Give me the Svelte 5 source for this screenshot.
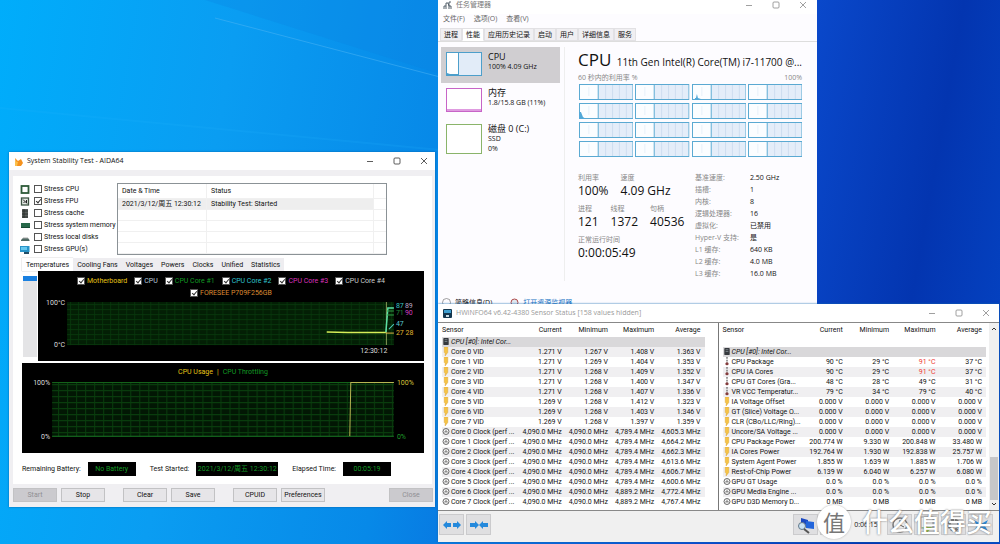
<script>
  const stress = [
    { name: 'Stress CPU', icon: 'cpu' },
    { name: 'Stress FPU', icon: 'fpu', on: true },
    { name: 'Stress cache', icon: 'cache' },
    { name: 'Stress system memory', icon: 'ram' },
    { name: 'Stress local disks', icon: 'disk' },
    { name: 'Stress GPU(s)', icon: 'gpu' },
  ];
  const tabs = ['Temperatures', 'Cooling Fans', 'Voltages', 'Powers', 'Clocks', 'Unified', 'Statistics'];
  const probes = [
    ['Motherboard', 'gold'],
    ['CPU', 'pale'],
    ['CPU Core #1', 'green'],
    ['CPU Core #2', 'cyan'],
    ['CPU Core #3', 'magenta'],
    ['CPU Core #4', 'light'],
  ];
  const taskTabs = ['进程', '性能', '应用历史记录', '启动', '用户', '详细信息', '服务'];
  const cores = Array.from({ length: 16 }, (_, i) => i);
  const spikes = {
    0: 'M0 15 L20 15.5 V16 H0 Z',
    2: 'M3 16 V14 L4 14 L5 10 L6 14 L9 15 V16 Z',
    4: 'M0 16 V9 L2 9 L4 14 L7 16 Z',
    6: 'M0 15.5 H10 V16 H0 Z',
  };
  const specs = [
    ['基准速度:', '2.50 GHz'],
    ['插槽:', '1'],
    ['内核:', '8'],
    ['逻辑处理器:', '16'],
    ['虚拟化:', '已禁用'],
    ['Hyper-V 支持:', '是'],
    ['L1 缓存:', '640 KB'],
    ['L2 缓存:', '4.0 MB'],
    ['L3 缓存:', '16.0 MB'],
  ];
  const columns = ['Current', 'Minimum', 'Maximum', 'Average'];
  const left = [
    ['volt', 'Core 0 VID', '1.271 V', '1.267 V', '1.408 V', '1.363 V'],
    ['volt', 'Core 1 VID', '1.271 V', '1.269 V', '1.404 V', '1.353 V'],
    ['volt', 'Core 2 VID', '1.271 V', '1.268 V', '1.409 V', '1.352 V'],
    ['volt', 'Core 3 VID', '1.271 V', '1.268 V', '1.400 V', '1.347 V'],
    ['volt', 'Core 4 VID', '1.271 V', '1.268 V', '1.407 V', '1.336 V'],
    ['volt', 'Core 5 VID', '1.269 V', '1.268 V', '1.412 V', '1.323 V'],
    ['volt', 'Core 6 VID', '1.269 V', '1.268 V', '1.403 V', '1.346 V'],
    ['volt', 'Core 7 VID', '1.269 V', '1.268 V', '1.397 V', '1.359 V'],
    ['clock', 'Core 0 Clock (perf ...', '4,090.0 MHz', '4,090.0 MHz', '4,789.4 MHz', '4,605.3 MHz'],
    ['clock', 'Core 1 Clock (perf ...', '4,090.0 MHz', '4,090.0 MHz', '4,789.4 MHz', '4,664.2 MHz'],
    ['clock', 'Core 2 Clock (perf ...', '4,090.0 MHz', '4,090.0 MHz', '4,789.4 MHz', '4,662.3 MHz'],
    ['clock', 'Core 3 Clock (perf ...', '4,090.0 MHz', '4,090.0 MHz', '4,789.4 MHz', '4,613.6 MHz'],
    ['clock', 'Core 4 Clock (perf ...', '4,090.0 MHz', '4,090.0 MHz', '4,789.4 MHz', '4,606.7 MHz'],
    ['clock', 'Core 5 Clock (perf ...', '4,090.0 MHz', '4,090.0 MHz', '4,789.4 MHz', '4,600.6 MHz'],
    ['clock', 'Core 6 Clock (perf ...', '4,090.0 MHz', '4,090.0 MHz', '4,889.2 MHz', '4,772.4 MHz'],
    ['clock', 'Core 7 Clock (perf ...', '4,090.0 MHz', '4,090.0 MHz', '4,889.2 MHz', '4,767.4 MHz'],
  ];
  const right = [
    ['temp', 'CPU Package', '90 °C', '29 °C', '91 °C', '37 °C'],
    ['temp', 'CPU IA Cores', '90 °C', '29 °C', '91 °C', '37 °C'],
    ['temp', 'CPU GT Cores (Gra...', '48 °C', '28 °C', '49 °C', '31 °C'],
    ['temp', 'VR VCC Temperatur...', '79 °C', '34 °C', '79 °C', '40 °C'],
    ['volt', 'IA Voltage Offset', '0.000 V', '0.000 V', '0.000 V', '0.000 V'],
    ['volt', 'GT (Slice) Voltage O...', '0.000 V', '0.000 V', '0.000 V', '0.000 V'],
    ['volt', 'CLR (CBo/LLC/Ring)...', '0.000 V', '0.000 V', '0.000 V', '0.000 V'],
    ['volt', 'Uncore/SA Voltage ...', '0.000 V', '0.000 V', '0.000 V', '0.000 V'],
    ['volt', 'CPU Package Power', '200.774 W', '9.330 W', '200.848 W', '33.480 W'],
    ['volt', 'IA Cores Power', '192.764 W', '1.930 W', '192.838 W', '25.757 W'],
    ['volt', 'System Agent Power', '1.855 W', '1.639 W', '1.885 W', '1.706 W'],
    ['volt', 'Rest-of-Chip Power', '6.139 W', '6.040 W', '6.257 W', '6.080 W'],
    ['clock', 'GPU GT Usage', '0.0 %', '0.0 %', '0.0 %', '0.0 %'],
    ['clock', 'GPU Media Engine ...', '0.0 %', '0.0 %', '0.0 %', '0.0 %'],
    ['clock', 'GPU D3D Memory D...', '0 MB', '0 MB', '0 MB', '0 MB'],
  ];
</script>

{#snippet controls()}
  <div class="controls">
    <button aria-label="Minimize"><svg viewBox="0 0 8 8"><path d="M1 4.500 H7" /></svg></button>
    <button aria-label="Maximize"><svg viewBox="0 0 8 8"><rect x="1" y="1" width="6" height="6" rx="1" /></svg></button>
    <button aria-label="Close"><svg viewBox="0 0 8 8"><path d="M1 1 L7 7 M7 1 L1 7" /></svg></button>
  </div>
{/snippet}

{#snippet stressIcon(kind)}
  <svg class="dev" viewBox="0 0 10 9">
    {#if kind === 'cpu'}
      <rect x="1.500" y="1" width="7" height="7" fill="#fff" stroke="#2d5a38" stroke-width="1.800" />
    {:else if kind === 'fpu'}
      <rect x="1.500" y="1" width="7" height="7" fill="#e3e9e3" stroke="#3c5443" stroke-width="1.300" />
      <path d="M3 2.500 L7 6.500 M6.500 3 V6 M3.500 6 L5 4.500" stroke="#222" />
    {:else if kind === 'cache'}
      <rect x="2" y="0" width="6" height="9" fill="#5b605e" />
      <path d="M2 2 H8 M2 5 H8 M2 8 H8 M4 0 V9" stroke="#242827" stroke-width=".8" />
    {:else if kind === 'ram'}
      <rect x="1" y="2" width="9" height="5" fill="#27694a" />
      <path d="M1 6.500 H10" stroke="#164a34" />
    {:else if kind === 'disk'}
      <path d="M1 7 L3 5 H8 L9.500 7 V8 H1 Z" fill="#4e6963" />
      <path d="M3 5 H8" stroke="#aaa" />
    {:else}
      <rect x="0" y="1" width="9.500" height="6" fill="#2894c8" />
      <rect x="1" y="2" width="6" height="3" fill="#63c7ee" />
      <rect x="4" y="7" width="5" height="2" fill="#234f68" />
    {/if}
  </svg>
{/snippet}

{#snippet sensorIcon(kind)}
  <svg class="sicon" viewBox="0 0 8 10">
    {#if kind === 'volt'}
      <path d="M2 0 H6 V6 L3 10 V7 L2 6 Z" fill="#f6c445" stroke="#d9a441" stroke-width=".5" />
    {:else if kind === 'clock'}
      <circle cx="4" cy="5" r="3.300" fill="#fff" stroke="#444" stroke-width=".9" />
      <path d="M4 3 V5.500 H6 M2 5.500 H4" fill="none" stroke="#444" stroke-width=".8" />
    {:else if kind === 'temp'}
      <path d="M4 0 V7" stroke="#777" stroke-width="1.600" stroke-dasharray="2 1" />
      <circle cx="4" cy="7.500" r="1.800" fill="#843c3c" />
    {:else}
      <rect x="1" y="1" width="6" height="8" rx="1" fill="#35393d" />
      <path d="M2.500 3 H5.500 M2.500 5 H5.500" stroke="#9aa4ac" stroke-width=".7" />
    {/if}
  </svg>
{/snippet}

{#snippet sensorTable(rows, gap)}
  <table class="sensors">
    <colgroup><col class="name" /><col /><col /><col /><col /><col class="pad" /></colgroup>
    <thead>
      <tr>
        <th>Sensor</th>
        {#each columns as c}<th class="num">{c}</th>{/each}
        <th></th>
      </tr>
    </thead>
    <tbody>
      {#if gap}<tr class="blank"><td colspan="6"></td></tr>{/if}
      <tr class="group">
        <td colspan="6">{@render sensorIcon('chip')}<em>CPU [#0]: Intel Cor...</em></td>
      </tr>
      {#each rows as [icon, name, ...values], i}
        <tr class:alt={gap ? i % 2 === 1 : i % 2 === 0}>
          <td>{@render sensorIcon(icon)}{name}</td>
          {#each values as v}<td class="num" class:hot={v === '91 °C'}>{v}</td>{/each}
          <td></td>
        </tr>
      {/each}
    </tbody>
  </table>
{/snippet}

<main class="desktop">
  <svg class="beams" viewBox="0 0 1000 544" preserveAspectRatio="none">
    <path d="M205 0 L440 74 V0 Z" fill="#0b7fe0" opacity=".25" />
    <path d="M215 18 L440 77" stroke="#4fb6f5" opacity=".5" />
    <path d="M0 108 L440 150" stroke="#25b6ff" stroke-width="2" opacity=".15" />
  </svg>

  <section class="window stability">
    <header class="titlebar">
      <svg class="logo" viewBox="0 0 9 9"><path d="M1 1 L4 4 L7 2 L9 6 L7 9 H2 Z" fill="#f5921e" /><path d="M1 4 L4 5 L3 9 H1 Z" fill="#fbc04b" /></svg>
      <h1>System Stability Test - AIDA64</h1>
      {@render controls()}
    </header>
    <div class="panel">
      <div class="setup">
        <div class="checks">
          {#each stress as s}
            <label>{@render stressIcon(s.icon)}<input type="checkbox" checked={s.on} />{s.name}</label>
          {/each}
        </div>
        <table class="events">
          <colgroup><col class="date" /><col /><col class="end" /></colgroup>
          <thead><tr><th>Date &amp; Time</th><th>Status</th><th></th></tr></thead>
          <tbody>
            <tr class="picked"><td>2021/3/12/周五 12:30:12</td><td>Stability Test: Started</td><td></td></tr>
            {#each [1, 2, 3, 4] as n (n)}<tr><td></td><td></td><td></td></tr>{/each}
          </tbody>
        </table>
      </div>
      <nav class="tabs">
        {#each tabs as t, i}<button class:active={i === 0}>{t}</button>{/each}
      </nav>
      <div class="temps">
        <div class="tree"></div>
        <div class="graph">
          <div class="legend">
            {#each probes as [name, tone]}
              <label class={tone}><input type="checkbox" checked />{name}</label>
            {/each}
          </div>
          <div class="legend">
            <label class="orange"><input type="checkbox" checked />FORESEE P709F256GB</label>
          </div>
          <svg class="plot" viewBox="0 0 385 63">
            <defs>
              <pattern id="fine" width="8" height="5" patternUnits="userSpaceOnUse">
                <path d="M0 .5 H8 M.5 0 V5" stroke="#083a0c" stroke-width=".7" />
              </pattern>
            </defs>
            <rect x="29" y="3" width="326" height="43" fill="#031f05" />
            <rect x="29" y="3" width="326" height="43" fill="url(#fine)" />
            <path d="M347.500 3 V46" stroke="#879b58" />
            <path d="M288 33 L309 33.500 H347" class="trace" stroke="#d6ee58" />
            <path d="M347 33 L349 9 H355" class="trace" stroke="#5be0a4" />
            <path d="M348 12 H355 M348 16 H355" stroke="#2f9a45" />
            <path d="M350 30 L355 25" stroke="#4fc7ba" fill="none" />
            <path d="M347 34 H355" stroke="#e0b546" />
            <text x="27" y="6" text-anchor="end" fill="#ddd">100°C</text>
            <text x="27" y="48" text-anchor="end" fill="#ddd">0°C</text>
            <text x="357" y="9" fill="#37c3c3">87</text>
            <text x="366" y="9" fill="#b9a7c4">89</text>
            <text x="357" y="16" fill="#238a3d">71</text>
            <text x="366" y="16" fill="#d43ec0">90</text>
            <text x="357" y="27" fill="#5ac7d2">47</text>
            <text x="357" y="36" fill="#e0b52f">27 28</text>
            <text x="335" y="54" text-anchor="middle" fill="#ddd">12:30:12</text>
          </svg>
        </div>
      </div>
      <div class="graph usage">
        <p><span class="gold">CPU Usage</span><span class="gold">|</span><span class="green">CPU Throttling</span></p>
        <svg class="plot" viewBox="0 0 401 75">
          <defs>
            <pattern id="coarse" width="9" height="6" patternUnits="userSpaceOnUse">
              <path d="M0 .5 H9 M.5 0 V6" stroke="#093d0d" />
            </pattern>
          </defs>
          <rect x="30" y="4" width="341" height="54" fill="#021704" />
          <rect x="30" y="4" width="341" height="54" fill="url(#coarse)" />
          <path d="M30 4.500 H371" stroke="#14611a" />
          <path d="M30 58 H371" stroke="#1a7c24" />
          <path d="M327 58 L328 4.500 H371" fill="none" stroke="#b7b552" />
          <text x="28" y="7" text-anchor="end" fill="#ddd">100%</text>
          <text x="28" y="61" text-anchor="end" fill="#ddd">0%</text>
          <text x="374" y="7" fill="#d9c53c">100%</text>
          <text x="374" y="61" fill="#1f9a2a">0%</text>
        </svg>
      </div>
      <div class="status">
        <span>Remaining Battery:</span><output>No Battery</output>
        <span>Test Started:</span><output class="wide">2021/3/12/周五 12:30:12</output>
        <span>Elapsed Time:</span><output>00:05:19</output>
      </div>
    </div>
    <footer class="actions">
      <button disabled>Start</button>
      <button>Stop</button>
      <button class="apart">Clear</button>
      <button>Save</button>
      <button class="apart">CPUID</button>
      <button>Preferences</button>
      <button class="last" disabled>Close</button>
    </footer>
  </section>

  <section class="window taskmgr">
    <header class="titlebar">
      <svg class="logo" viewBox="0 0 9 9"><path d="M1 8 V5 H3 V2 H5 L6 5 H8 V8 M3 8 V5 M6 8 V1 H8" fill="none" stroke="#55606a" /></svg>
      <h1>任务管理器</h1>
      {@render controls()}
    </header>
    <nav class="menu"><button>文件(F)</button><button>选项(O)</button><button>查看(V)</button></nav>
    <nav class="tasktabs">
      {#each taskTabs as t, i}<button class:active={i === 1}>{t}</button>{/each}
    </nav>
    <div class="perf">
      <ul class="devices">
        <li class="selected">
          <svg class="thumb" viewBox="0 0 36 24"><rect x=".5" y=".5" width="35" height="23" fill="#fff" stroke="#4d9fcb" /><rect x="13" y="1" width="22" height="22" fill="#e2ecf8" /><path d="M12.500 1 V23" stroke="#4d9fcb" /><path d="M1 21 L4 22 H12 V23 H1 Z" fill="#4d9fcb" /></svg>
          <div><strong>CPU</strong><span>100% 4.09 GHz</span></div>
        </li>
        <li>
          <svg class="thumb" viewBox="0 0 36 24"><rect x=".5" y=".5" width="35" height="23" fill="#fff" stroke="#c764c7" /><path d="M1 22 H35" stroke="#df9be0" stroke-width="2" /></svg>
          <div><strong>内存</strong><span>1.8/15.8 GB (11%)</span></div>
        </li>
        <li>
          <svg class="thumb tall" viewBox="0 0 36 30"><rect x=".5" y=".5" width="35" height="29" fill="#fff" stroke="#8ab46a" /></svg>
          <div><strong>磁盘 0 (C:)</strong><span>SSD</span><span>0%</span></div>
        </li>
      </ul>
      <div class="detail">
        <div class="heading"><h2>CPU</h2><p>11th Gen Intel(R) Core(TM) i7-11700 @...</p></div>
        <div class="scale"><span>60 秒内的利用率 %</span><span>100%</span></div>
        <div class="cores">
          {#each cores as c}
            <svg viewBox="0 0 55 16" preserveAspectRatio="none">
              <rect x=".5" y=".5" width="54" height="15" fill="#fbfdff" stroke="#5aa9d2" />
              <rect x="20" y="1" width="34" height="14" fill="#e4edf9" />
              <path d="M27 1 V15 M34 1 V15 M41 1 V15 M48 1 V15" stroke="#c5d7ec" stroke-width=".7" />
              <path d="M10 3 V12" stroke="#dcebf5" stroke-width=".7" />
              <path d="M19.500 0 V16" stroke="#5aa9d2" />
              {#if spikes[c]}<path d={spikes[c]} fill="#52a8d8" />{/if}
            </svg>
          {/each}
        </div>
        <div class="facts">
          <div class="big">
            <dl><div><dt>利用率</dt><dd>100%</dd></div><div><dt>速度</dt><dd>4.09 GHz</dd></div></dl>
            <dl><div><dt>进程</dt><dd>121</dd></div><div><dt>线程</dt><dd>1372</dd></div><div><dt>句柄</dt><dd>40536</dd></div></dl>
            <dl><div><dt>正常运行时间</dt><dd>0:00:05:49</dd></div></dl>
          </div>
          <dl class="specs">
            {#each specs as [k, v]}<dt>{k}</dt><dd>{v}</dd>{/each}
          </dl>
        </div>
      </div>
    </div>
    <footer class="more">
      <svg class="logo" viewBox="0 0 9 9"><circle cx="4.500" cy="4.500" r="4" fill="none" stroke="#777" stroke-width=".7" /></svg>
      <span>简略信息(D)</span>
      <svg class="logo gauge" viewBox="0 0 9 9"><circle cx="4.500" cy="4.500" r="3.500" fill="#dfe8f0" stroke="#b04a4a" /></svg>
      <a href="#monitor">打开资源监视器</a>
    </footer>
  </section>

  <section class="window hwinfo">
    <header class="titlebar">
      <svg class="logo" viewBox="0 0 9 9"><rect width="9" height="9" rx="1" fill="#14374f" /><rect x="1" y="1" width="7" height="3" fill="#3f9fd0" /><path d="M3 6 H6 V8 H3 Z" fill="#c9dbe5" /></svg>
      <h1>HWiNFO64 v6.42-4380 Sensor Status [158 values hidden]</h1>
      {@render controls()}
    </header>
    <div class="panes">
      <div class="pane">{@render sensorTable(left, false)}</div>
      <div class="pane">{@render sensorTable(right, true)}</div>
      <div class="scrollbar">
        <svg viewBox="0 0 8 8"><path d="M2 5 L4 3 L6 5" /></svg>
        <i></i>
        <svg viewBox="0 0 8 8"><path d="M2 3 L4 5 L6 3" /></svg>
      </div>
    </div>
    <footer class="tools">
      <button aria-label="Expand columns"><svg viewBox="0 0 20 10"><path d="M1 5 L5 1 V3 H9 V7 H5 V9 Z M19 5 L15 1 V3 H11 V7 H15 V9 Z" fill="#2489dc" /></svg></button>
      <button aria-label="Shrink columns"><svg viewBox="0 0 20 10"><path d="M10 5 L6 1 V3 H1 V7 H6 V9 Z M10 5 L14 1 V3 H19 V7 H14 V9 Z" fill="#2489dc" /></svg></button>
      <button class="first" aria-label="Remote monitoring"><svg viewBox="0 0 20 18"><path d="M5 2 L12 4 V11 L5 8 Z" fill="#1a48c0" /><path d="M10 5 L18 6 V13 L10 12 Z" fill="#2265db" /><circle cx="6" cy="10" r="3.500" fill="#c9e2f4" stroke="#617787" /><path d="M8 13 L13 17" stroke="#555" stroke-width="2" /></svg></button>
      <button aria-label="Sensor log"></button>
      <span class="timer">0:06:15</span>
      <button aria-label="Reset clock"><svg viewBox="0 0 20 18"><circle cx="10" cy="9" r="7" fill="#f4f4f4" stroke="#777" stroke-width="1.500" /><path d="M10 4 V9 L14 11" fill="none" stroke="#555" /></svg></button>
      <button aria-label="Save log"><svg viewBox="0 0 20 18"><rect x="4" y="1" width="12" height="11" fill="#f8f8f8" stroke="#999" /><path d="M5 11 H15 L10 17 Z" fill="#8cc63f" /></svg></button>
      <button aria-label="Settings"><svg viewBox="0 0 20 18"><circle cx="10" cy="9" r="5" fill="none" stroke="#777" stroke-width="3" stroke-dasharray="3 1" /></svg></button>
      <button aria-label="Close sensors"><svg viewBox="0 0 20 18"><path d="M3 4 L10 8 L17 4 L14 10 L17 15 L10 12 L3 15 L6 10 Z" fill="#2489dc" /></svg></button>
    </footer>
  </section>

  <div class="watermark"><b>值</b><span>什么值得买</span></div>
</main>

<style>
  :global(body) {
    margin: 0;
  }
  .desktop {
    position: relative;
    min-height: 100vh;
    overflow: hidden;
    background: linear-gradient(100deg, #00adfb 0%, #0a9df2 22%, #0789e8 42%, #0b4cd0 72%, #0335b0 88%, #0546c6 100%);
    color: #111;
    font: 7px/10px 'Open Sans', 'Noto Sans CJK SC', sans-serif;
  }
  .desktop * {
    box-sizing: border-box;
  }
  .beams {
    position: absolute;
    width: 100%;
    height: 100%;
  }
  button {
    padding: 0;
    border: 0;
    background: none;
    color: inherit;
    font: inherit;
    white-space: nowrap;
  }
  h1, h2, p, ul, dl, dd {
    margin: 0;
    padding: 0;
    font-weight: 400;
  }
  ul {
    list-style: none;
  }
  table {
    border-collapse: collapse;
    table-layout: fixed;
  }
  th, td {
    padding: 0;
    font-weight: 400;
    text-align: left;
    white-space: nowrap;
  }

  .window {
    position: absolute;
    display: flex;
    flex-direction: column;
    background: #fdfcff;
  }
  .stability {
    left: 9px;
    top: 152px;
    width: calc(43% - 4px);
    background: #f0eff2;
    box-shadow: 0 0 2px #0560a8;
  }
  .taskmgr {
    left: 438px;
    top: -4px;
    width: 379px;
  }
  .hwinfo {
    left: 438px;
    right: 1px;
    top: 304px;
    bottom: 2px;
    background: #f0f0f0;
    box-shadow: 0 0 2px #1567ae;
  }

  .titlebar {
    display: flex;
    align-items: center;
    height: 18px;
    padding: 0 7px 0 5px;
    background: #fff;
  }
  .titlebar h1 {
    flex: 1;
    font-size: 7px;
  }
  .logo {
    width: 9px;
    height: 9px;
    margin-right: 4px;
  }
  .controls {
    display: flex;
    gap: 19px;
  }
  .controls button {
    width: 8px;
    height: 8px;
  }
  .controls svg {
    display: block;
    width: 8px;
    height: 8px;
    fill: none;
    stroke: #333;
    stroke-width: 0.8;
  }
  .taskmgr .controls svg,
  .hwinfo .controls svg {
    stroke: #888;
  }
  .hwinfo .titlebar {
    padding-right: 9px;
  }
  .hwinfo h1 {
    color: #999;
  }
  .taskmgr .titlebar {
    padding-right: 10px;
  }
  .taskmgr h1 {
    color: #777;
  }

  .panel {
    margin: 6px 3px 0 4px;
    padding: 7px 8px 8px 9px;
    background: #fff;
  }
  .panel,
  .actions,
  .sensors {
    font-family: Roboto, 'Noto Sans CJK SC', sans-serif;
  }
  .setup {
    display: flex;
  }
  .checks {
    width: 95px;
  }
  .checks label {
    display: flex;
    align-items: center;
    height: 12px;
    white-space: nowrap;
  }
  .dev {
    flex: none;
    width: 10px;
    height: 9px;
    margin: 0 4px 0 -2px;
    fill: none;
  }
  input[type='checkbox'] {
    appearance: none;
    position: relative;
    flex: none;
    width: 8px;
    height: 8px;
    margin: 0 2px 0 0;
    border: 1px solid #555;
    background: #fff;
  }
  input[type='checkbox']:checked::after {
    content: '';
    position: absolute;
    left: 2px;
    top: 0;
    width: 2px;
    height: 4px;
    border: solid #333;
    border-width: 0 1px 1px 0;
    transform: rotate(40deg);
  }
  .events {
    flex: none;
    width: 270px;
    height: 71px;
    border: 1px solid #8b9296;
    border-collapse: separate;
    border-spacing: 0;
  }
  .events .date {
    width: 89px;
  }
  .events .end {
    width: 12px;
  }
  .events th,
  .events td {
    padding-left: 4px;
    border-bottom: 1px solid #f0f0f0;
  }
  .events th:not(:last-child),
  .events td:not(:last-child) {
    border-right: 1px solid #f0f0f0;
  }
  .events th {
    height: 15px;
  }
  .events td {
    height: 11px;
  }
  .events .picked td:not(:last-child) {
    background: #eee;
  }
  .tabs {
    display: flex;
    margin-top: 3px;
  }
  .tabs button {
    height: 13px;
    padding: 0 4px;
    background: #eeedf0;
  }
  .tabs .active {
    background: #fff;
    box-shadow: 0 0 1px #999;
  }
  .temps {
    display: flex;
    gap: 1px;
  }
  .tree {
    width: 14px;
    margin: 5px 0 4px 1px;
    border-top: 5px solid #1a80e0;
    background: #e4e4e6;
  }
  .graph {
    flex: 1;
    height: 90px;
    padding-top: 4px;
    background: #000;
  }
  .legend {
    display: flex;
    justify-content: center;
    gap: 7px;
    height: 12px;
  }
  .legend label {
    display: flex;
    align-items: center;
    white-space: nowrap;
  }
  .gold { color: #e6c316; }
  .pale { color: #b9c9dc; }
  .green { color: #129a24; }
  .cyan { color: #2fc4cd; }
  .magenta { color: #dc32bd; }
  .light { color: #ccc; }
  .orange { color: #de8b32; }
  .plot {
    display: block;
    width: 100%;
    font-size: 7px;
  }
  .trace {
    fill: none;
    stroke-width: 1.500;
  }
  .usage {
    margin-top: 2px;
  }
  .usage p {
    display: flex;
    justify-content: center;
    gap: 4px;
    height: 11px;
  }
  .status {
    display: flex;
    align-items: center;
    margin-top: 9px;
    white-space: nowrap;
  }
  .status output {
    width: 48px;
    height: 14px;
    margin: 0 14px 0 7px;
    background: #000;
    color: #149b26;
    line-height: 14px;
    text-align: center;
  }
  .status .wide {
    width: 82px;
  }
  .actions {
    display: flex;
    gap: 4px;
    padding: 4px 2px 5px 4px;
  }
  .actions button {
    width: 44px;
    height: 14px;
    border: 1px solid #c2c2c4;
    background: #e6e5e8;
    line-height: 12px;
  }
  .actions button:disabled {
    background: #cbcace;
    color: #909094;
  }
  .actions .apart {
    margin-left: 14px;
  }
  .actions .last {
    margin-left: auto;
  }

  .menu {
    display: flex;
    gap: 9px;
    padding: 0 5px;
    color: #666;
  }
  .tasktabs {
    display: flex;
    margin-top: 4px;
    border-bottom: 1px solid #ddd;
    padding-left: 2px;
  }
  .tasktabs button {
    height: 13px;
    padding: 0 3px;
    border: 1px solid #e2e1e4;
    background: #f0eff2;
  }
  .tasktabs .active {
    background: #fff;
    border-bottom-color: #fff;
  }
  .perf {
    display: flex;
    margin-top: 5px;
  }
  .devices {
    width: 127px;
    padding-left: 3px;
    border-right: 1px solid #eee;
  }
  .devices li {
    display: flex;
    gap: 6px;
    width: 119px;
    height: 36px;
    padding: 5px;
    white-space: nowrap;
  }
  .devices .selected {
    background: #d0ced1;
  }
  .devices strong,
  .devices span {
    display: block;
    font-weight: 400;
  }
  .devices strong {
    font-size: 9px;
  }
  .thumb {
    flex: none;
    width: 36px;
    height: 24px;
  }
  .thumb.tall {
    height: 30px;
  }
  .detail {
    flex: 1;
    padding: 0 15px 0 13px;
  }
  .heading {
    display: flex;
    align-items: baseline;
    justify-content: space-between;
    white-space: nowrap;
  }
  .heading h2 {
    font-size: 17px;
    line-height: 26px;
  }
  .heading p {
    font-size: 10px;
  }
  .scale {
    display: flex;
    justify-content: space-between;
    color: #888;
  }
  .cores {
    display: grid;
    grid-template-columns: repeat(4, 1fr);
    gap: 3px 2px;
    margin: 1px 0 0 1px;
  }
  .cores svg {
    display: block;
    width: 100%;
    height: 16px;
  }
  .facts {
    display: flex;
    margin-top: 16px;
    white-space: nowrap;
  }
  .big {
    width: 117px;
  }
  .big dl {
    display: flex;
    gap: 12px;
    margin-bottom: 5px;
  }
  .facts dt {
    color: #888;
  }
  .big dd {
    font-size: 12px;
    line-height: 16px;
  }
  .specs {
    display: grid;
    grid-template-columns: 55px 1fr;
    grid-auto-rows: 12px;
    align-content: start;
  }
  .more {
    display: flex;
    padding: 17px 4px 0;
    height: 29px;
    overflow: hidden;
  }
  .more .gauge {
    margin-left: 18px;
  }
  .more a {
    color: #1672c4;
    text-decoration: none;
  }

  .panes {
    flex: 1;
    display: flex;
    min-height: 0;
    border: solid #888;
    border-width: 1px 0;
    background: #fff;
  }
  .pane {
    flex: 1;
    padding: 0 3px 0 4px;
    overflow: hidden;
  }
  .pane:first-child {
    flex: 0 0 50%;
    padding-right: 13px;
    border-right: 1px solid #777;
  }
  .sensors {
    width: 100%;
  }
  .sensors .name {
    width: 28%;
  }
  .sensors .pad {
    width: 4px;
  }
  .sensors th {
    height: 14px;
  }
  .sensors td {
    height: 10px;
    line-height: 10px;
    vertical-align: top;
  }
  .sensors .num {
    text-align: right;
  }
  .sensors .alt {
    background: #f0eff1;
  }
  .sensors .group {
    background: #d9d8da;
  }
  .sensors .hot {
    color: #ee3b36;
  }
  .sicon {
    width: 8px;
    height: 9px;
    margin-right: 1px;
    vertical-align: top;
  }
  .scrollbar {
    display: flex;
    flex-direction: column;
    align-items: center;
    width: 10px;
    padding: 2px 0;
    background: #f0f0f0;
  }
  .scrollbar svg {
    width: 8px;
    height: 8px;
    fill: none;
    stroke: #333;
  }
  .scrollbar i {
    width: 8px;
    height: 43px;
    margin-top: auto;
    background: #c6c6c8;
  }
  .tools {
    display: flex;
    align-items: center;
    gap: 2px;
    height: 31px;
    padding: 0 6px 4px 1px;
  }
  .tools button {
    width: 25px;
    height: 21px;
    border: 1px solid #cbcbcd;
    background: #dfdfe1;
  }
  .tools svg {
    display: block;
    width: 20px;
    max-height: 18px;
    margin: auto;
  }
  .tools .first {
    margin-left: auto;
  }
  .tools .timer {
    width: 38px;
    text-align: center;
  }
  .watermark {
    position: absolute;
    right: 8px;
    bottom: 4px;
    display: flex;
    align-items: center;
    gap: 11px;
    color: #fff;
    font-size: 26px;
    font-weight: 500;
    line-height: 36px;
    text-shadow: 0 0 2px #666;
  }
  .watermark b {
    width: 34px;
    height: 34px;
    border-radius: 50%;
    background: #fff;
    box-shadow: 0 0 2px #aaa;
    color: #777;
    font-size: 22px;
    font-weight: 400;
    line-height: 34px;
    text-align: center;
    text-shadow: none;
  }
</style>
